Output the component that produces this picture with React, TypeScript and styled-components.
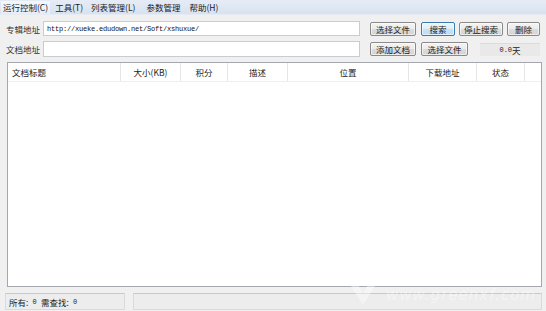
import React from 'react';
import styled, { createGlobalStyle } from 'styled-components';

const GlobalStyle = createGlobalStyle`
  html, body {
    margin: 0;
    padding: 0;
    background: #f0f0f0;
  }
  body {
    font-family: "Noto Sans CJK SC", "Liberation Sans", sans-serif;
    font-size: 8.5px;
    color: #1a1a1a;
  }
`;

const Window = styled.div`
  position: relative;
  width: 546px;
  height: 311px;
  overflow: hidden;
  background: #f0f0f0;
  display: flex;
  flex-direction: column;
`;

const MenuBar = styled.div`
  display: flex;
  align-items: center;
  height: 14px;
  padding-left: 1px;
  background: linear-gradient(#e6ecf6, #d8e2f0);
  border-bottom: 1px solid #e6ebf3;
`;

const MenuItem = styled.div<{ $active?: boolean; $gap: number }>`
  height: 13px;
  line-height: 13px;
  padding: 0 2px;
  margin-right: ${p => p.$gap}px;
  background: ${p => (p.$active ? 'linear-gradient(#f4f7fb, #e7edf6)' : 'transparent')};
  white-space: nowrap;
`;

const Form = styled.div`
  display: flex;
  flex-direction: column;
  gap: 5px;
  padding: 6px 0 0 6px;
`;

const Row = styled.div<{ $h: number }>`
  display: flex;
  align-items: center;
  height: ${p => p.$h}px;
`;

const Label = styled.div`
  width: 37px;
  color: #333;
  white-space: nowrap;
`;

const Input = styled.div`
  box-sizing: border-box;
  width: 317px;
  height: 100%;
  margin-right: 10px;
  background: #fff;
  border: 1px solid #c9ccd2;
  display: flex;
  align-items: center;
  padding-left: 3px;
`;

const Url = styled.span`
  font-family: "Liberation Mono", monospace;
  font-size: 7px;
  letter-spacing: -0.2px;
  color: #111;
`;

const Button = styled.div<{ $w: number; $gap: number; $default?: boolean }>`
  box-sizing: border-box;
  width: ${p => p.$w}px;
  height: 14px;
  margin-right: ${p => p.$gap}px;
  border: 1px solid ${p => (p.$default ? '#3d7bad' : '#8a8a8a')};
  border-radius: 2px;
  background: ${p =>
    p.$default
      ? 'linear-gradient(#eef6fc 0%, #dceefa 50%, #c6e3f7 51%, #bcdcf3 100%)'
      : 'linear-gradient(#f4f4f4 0%, #ebebeb 50%, #dddddd 51%, #d3d3d3 100%)'};
  box-shadow: inset 0 0 0 1px rgba(255, 255, 255, 0.6);
  display: flex;
  align-items: center;
  justify-content: center;
  white-space: nowrap;
  color: #222;
`;

const DaysBox = styled.div`
  box-sizing: border-box;
  width: 60px;
  height: 13px;
  background: #e9e9e9;
  border-top: 1px solid #dcdcdc;
  display: flex;
  align-items: center;
  justify-content: center;
  color: #222;
`;

const Table = styled.div`
  box-sizing: border-box;
  margin: 5px 0 0 7px;
  width: 535px;
  height: 225px;
  background: #fff;
  border: 1px solid #a4a8ae;
`;

const Header = styled.div`
  display: grid;
  grid-template-columns: 113px 60px 47px 60px 121px 68px 48px 1fr;
  height: 18px;
  border-bottom: 1px solid #eceff3;
`;

const HeadCell = styled.div<{ $left?: boolean }>`
  display: flex;
  align-items: center;
  justify-content: ${p => (p.$left ? 'flex-start' : 'center')};
  padding-left: ${p => (p.$left ? 4 : 0)}px;
  border-right: 1px solid #e4e6ea;
  color: #222;
  white-space: nowrap;

  &:last-child {
    border-right: none;
  }
`;

const StatusBar = styled.div`
  display: flex;
  gap: 8px;
  margin: 6px 0 0 5px;
  height: 17px;
`;

const StatusPanel = styled.div<{ $w: number }>`
  box-sizing: border-box;
  width: ${p => p.$w}px;
  height: 100%;
  border: 1px solid #dadada;
  border-top-color: #c8c8c8;
  background: #ededed;
  display: flex;
  align-items: center;
  padding-left: 3px;
  color: #222;
  white-space: nowrap;
`;

const Mono = styled.span`
  font-family: "Liberation Mono", monospace;
  font-size: 7px;
`;

const Watermark = styled.div`
  position: absolute;
  left: 350px;
  top: 284px;
  display: flex;
  align-items: center;
  gap: 10px;
  opacity: 0.4;
  pointer-events: none;
`;

const WatermarkText = styled.span`
  font-family: "DejaVu Sans", sans-serif;
  font-style: italic;
  font-size: 15px;
  letter-spacing: 1px;
  color: #ffffff;
`;

const menus = [
  { label: '运行控制(C)', gap: 3, active: true },
  { label: '工具(T)', gap: 4 },
  { label: '列表管理(L)', gap: 7 },
  { label: '参数管理', gap: 5 },
  { label: '帮助(H)', gap: 0 },
];

const columns = ['大小(KB)', '积分', '描述', '位置', '下载地址', '状态', ''];

const App: React.FC = () => {
  return (
    <Window>
      <GlobalStyle />
      <MenuBar>
        {menus.map(m => (
          <MenuItem key={m.label} $active={m.active} $gap={m.gap}>
            {m.label}
          </MenuItem>
        ))}
      </MenuBar>
      <Form>
        <Row $h={15}>
          <Label>专辑地址</Label>
          <Input>
            <Url>http://xueke.edudown.net/Soft/xshuxue/</Url>
          </Input>
          <Button $w={46} $gap={5}>选择文件</Button>
          <Button $w={34} $gap={4} $default>搜索</Button>
          <Button $w={44} $gap={4}>停止搜索</Button>
          <Button $w={33} $gap={0}>删除</Button>
        </Row>
        <Row $h={16}>
          <Label>文档地址</Label>
          <Input />
          <Button $w={46} $gap={5}>添加文档</Button>
          <Button $w={47} $gap={12}>选择文件</Button>
          <DaysBox>
            <Mono>0.0</Mono>天
          </DaysBox>
        </Row>
      </Form>
      <Table>
        <Header>
          <HeadCell $left>文档标题</HeadCell>
          {columns.map((c, i) => (
            <HeadCell key={i}>{c}</HeadCell>
          ))}
        </Header>
      </Table>
      <StatusBar>
        <StatusPanel $w={120}>
          所有: <Mono>&nbsp;0&nbsp;</Mono>需查找: <Mono>&nbsp;0</Mono>
        </StatusPanel>
        <StatusPanel $w={409} />
      </StatusBar>
      <Watermark>
        <svg width="26" height="22" viewBox="0 0 26 22">
          <path d="M1 2 L13 21 L25 2 L17 2 L13 10 L9 2 Z" fill="#ffffff" />
        </svg>
        <WatermarkText>www.greenxf.com</WatermarkText>
      </Watermark>
    </Window>
  );
};

export default App;
